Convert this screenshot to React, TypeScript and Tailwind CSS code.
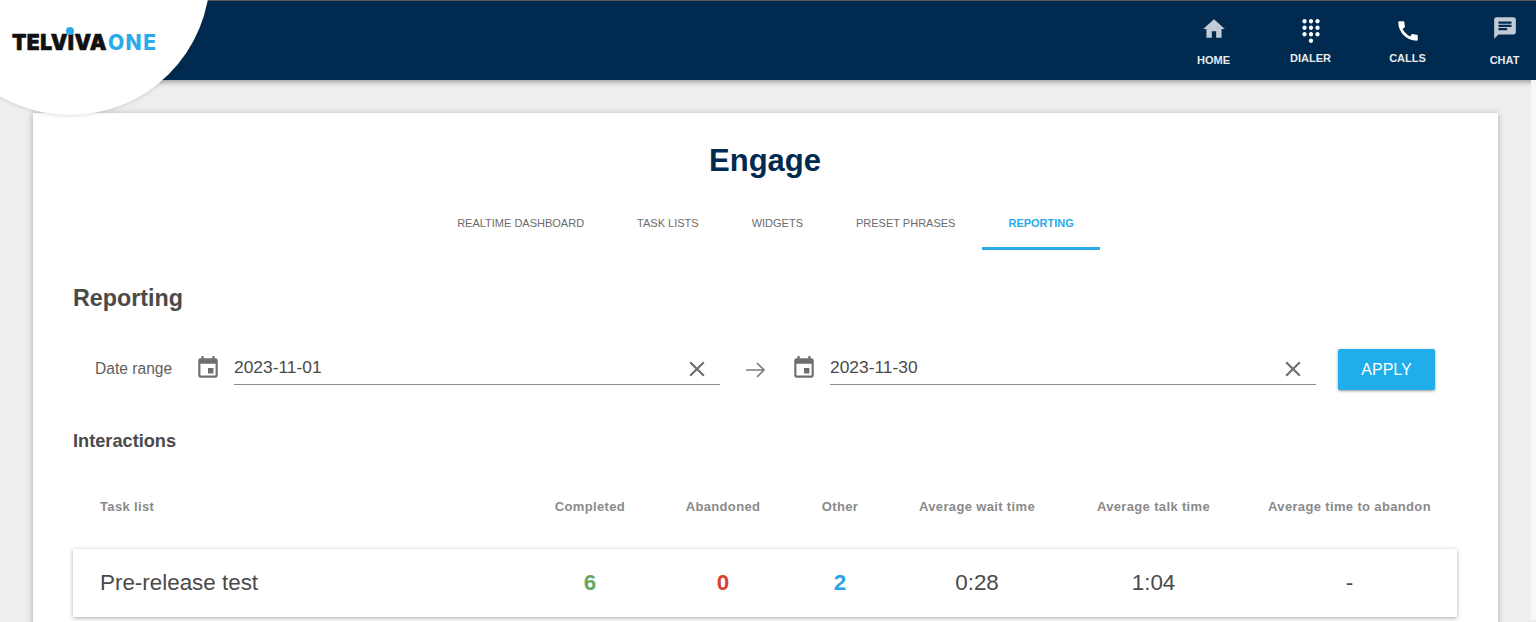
const HOME = 'M10 20v-6h4v6h5v-8h3L12 3 2 12h3v8z';
const DIALPAD =
  'M12 19c-1.1 0-2 .9-2 2s.9 2 2 2 2-.9 2-2-.9-2-2-2zM6 1c-1.1 0-2 .9-2 2s.9 2 2 2 2-.9 2-2-.9-2-2-2zm0 6c-1.1 0-2 .9-2 2s.9 2 2 2 2-.9 2-2-.9-2-2-2zm0 6c-1.1 0-2 .9-2 2s.9 2 2 2 2-.9 2-2-.9-2-2-2zm12-8c1.1 0 2-.9 2-2s-.9-2-2-2-2 .9-2 2 .9 2 2 2zm-6 8c-1.1 0-2 .9-2 2s.9 2 2 2 2-.9 2-2-.9-2-2-2zm6 0c-1.1 0-2 .9-2 2s.9 2 2 2 2-.9 2-2-.9-2-2-2zm0-6c-1.1 0-2 .9-2 2s.9 2 2 2 2-.9 2-2-.9-2-2-2zm-6 0c-1.1 0-2 .9-2 2s.9 2 2 2 2-.9 2-2-.9-2-2-2zm0-6c-1.1 0-2 .9-2 2s.9 2 2 2 2-.9 2-2-.9-2-2-2z';
const PHONE =
  'M20.01 15.38c-1.23 0-2.42-.2-3.53-.56-.35-.12-.74-.03-1.01.24l-1.57 1.97c-2.83-1.35-5.48-3.9-6.89-6.83l1.95-1.66c.27-.28.35-.67.24-1.02-.37-1.11-.56-2.3-.56-3.53 0-.54-.45-.99-.99-.99H4.19C3.65 3 3 3.24 3 3.99 3 13.28 10.73 21 20.01 21c.71 0 .99-.63.99-1.18v-3.45c0-.54-.45-.99-.99-.99z';
const CHAT =
  'M20 2H4c-1.1 0-1.99.9-1.99 2L2 22l4-4h14c1.1 0 2-.9 2-2V4c0-1.1-.9-2-2-2zM6 9h12v2H6V9zm8 5H6v-2h8v2zm4-6H6V6h12v2z';
const EVENT =
  'M17 12h-5v5h5v-5zM16 1v2H8V1H6v2H5c-1.11 0-1.99.9-1.99 2L3 19c0 1.1.89 2 2 2h14c1.1 0 2-.9 2-2V5c0-1.1-.9-2-2-2h-1V1h-2zm3 18H5V8h14v11z';
const CLOSE =
  'M19 6.41L17.59 5 12 10.59 6.41 5 5 6.41 10.59 12 5 17.59 6.41 19 12 13.41 17.59 19 19 17.59 13.41 12z';

const nav = [
  { label: 'HOME', path: HOME, icon: 'fill-[#c3ccd4] mt-[15px]', text: 'mt-[10px]' },
  { label: 'DIALER', path: DIALPAD, icon: 'fill-white mt-[17px]', text: 'mt-[6px]' },
  { label: 'CALLS', path: PHONE, icon: 'fill-white mt-[17px]', text: 'mt-[6px]' },
  { label: 'CHAT', path: CHAT, icon: 'fill-[#c3ccd4] mt-[14px]', text: 'mt-[11px]' },
];

const tabs = ['REALTIME DASHBOARD', 'TASK LISTS', 'WIDGETS', 'PRESET PHRASES', 'REPORTING'];

const columns = ['Completed', 'Abandoned', 'Other', 'Average wait time', 'Average talk time', 'Average time to abandon'];

const gridCols = 'grid grid-cols-[451px_132px_134px_100px_174px_179px_213px] items-center';

function Icon({ d, className }: { d: string; className: string }) {
  return (
    <svg viewBox="0 0 24 24" className={className}>
      <path d={d} />
    </svg>
  );
}

function DateField({ value }: { value: string }) {
  return (
    <div className="flex items-start">
      <Icon d={EVENT} className="w-[26px] h-[26px] fill-[#6e6e6e] mr-[13px] mt-[6px]" />
      <div className="w-[486px] h-[36px] flex items-center justify-between border-b border-[#8c8c8c]">
        <span className="text-[17.4px] text-[#4a4a4a] mt-[2px]">{value}</span>
        <Icon d={CLOSE} className="w-[26px] h-[26px] fill-[#6e6e6e] mr-[10px] mt-[4px]" />
      </div>
    </div>
  );
}

export default function App() {
  return (
    <div className="relative h-[622px] w-[1536px] overflow-hidden bg-[#eeeeee] font-['Liberation_Sans',sans-serif]">
      <header className="h-[80px] bg-[#002a50] border-t border-[#5a5a5a] shadow-[0_2px_5px_rgba(0,0,0,0.35)] flex justify-end">
        <nav className="flex -mr-[17px]">
          {nav.map((n) => (
            <div key={n.label} className="w-[97px] flex flex-col items-center">
              <Icon d={n.path} className={`w-[26px] h-[26px] ${n.icon}`} />
              <span className={`text-[11px] font-bold text-[#e8ebee] ${n.text}`}>{n.label}</span>
            </div>
          ))}
        </nav>
      </header>

      <div className="absolute -left-[70px] -top-[165px] w-[280px] h-[280px] rounded-full bg-white shadow-[0_1px_4px_rgba(0,0,0,0.12)]" />
      <div className="absolute left-[12px] top-[31px] flex items-baseline font-['Inter',sans-serif] text-[21px] leading-[24px] font-black">
        <span className="text-[#111111] tracking-[0.45px] [-webkit-text-stroke:0.6px_#111111]">TELVIVA</span>
        <span className="text-[#29abe9] ml-[1px] font-extrabold tracking-[1.5px]">ONE</span>
        <span className="absolute left-[54px] -top-[4px] w-[8px] h-[8px] rounded-full bg-[#29abe9]" />
      </div>

      <div className="flex justify-between">
        <main className="ml-[33px] mt-[33px] w-[1465px] h-[600px] bg-white shadow-[0_1px_6px_rgba(0,0,0,0.3)] pl-[40px] pr-[41px]">
          <h1 className="mt-[29px] text-center text-[31px] leading-[38px] font-bold text-[#002a50]">Engage</h1>

          <div className="mt-[22px] ml-[1px] flex justify-center h-[48px]">
            {tabs.map((t) => (
              <div
                key={t}
                className={`px-[26.5px] pt-[11px] text-[11px] leading-[20px] ${
                  t === 'REPORTING' ? 'text-[#29abe9] font-bold border-b-[3px] border-[#29abe9]' : 'text-[#6b6b6b]'
                }`}
              >
                {t}
              </div>
            ))}
          </div>

          <h2 className="mt-[34px] text-[23.3px] leading-[28px] font-bold text-[#4a4a4a]">Reporting</h2>

          <div className="mt-[37px] flex items-start h-[42px]">
            <span className="ml-[22px] w-[100px] mt-[10px] text-[15.6px] leading-[20px] text-[#5f5f5f]">Date range</span>
            <DateField value="2023-11-01" />
            <svg viewBox="0 0 24 24" className="w-[24px] h-[24px] ml-[23px] mr-[24px] mt-[9px] stroke-[#7a7a7a] fill-none stroke-[1.6]">
              <path d="M3 12h18M14 5l7 7-7 7" />
            </svg>
            <DateField value="2023-11-30" />
            <button className="ml-[22px] w-[97px] h-[41px] rounded-[2px] bg-[#1fadeb] text-white text-[16px] shadow-[0_1px_3px_rgba(0,0,0,0.4)]">
              APPLY
            </button>
          </div>

          <h3 className="mt-[38px] text-[18.2px] leading-[24px] font-bold text-[#4a4a4a]">Interactions</h3>

          <div className={`${gridCols} mt-[44px] h-[20px] text-[13px] font-bold text-[#8a8a8a] tracking-[0.35px]`}>
            <span className="pl-[27px]">Task list</span>
            {columns.map((c) => (
              <span key={c} className="text-center whitespace-nowrap">
                {c}
              </span>
            ))}
          </div>

          <div className={`${gridCols} mt-[32px] h-[68px] bg-white shadow-[0_1px_4px_rgba(0,0,0,0.35)] text-[22.4px] text-[#4a4a4a]`}>
            <span className="pl-[27px]">Pre-release test</span>
            <span className="text-center font-bold text-[#66a85f]">6</span>
            <span className="text-center font-bold text-[#d8412f]">0</span>
            <span className="text-center font-bold text-[#29a3e8]">2</span>
            <span className="text-center">0:28</span>
            <span className="text-center">1:04</span>
            <span className="text-center">-</span>
          </div>
        </main>
        <aside className="w-[5px] h-[540px] bg-[#f8f8f8]" />
      </div>
    </div>
  );
}
